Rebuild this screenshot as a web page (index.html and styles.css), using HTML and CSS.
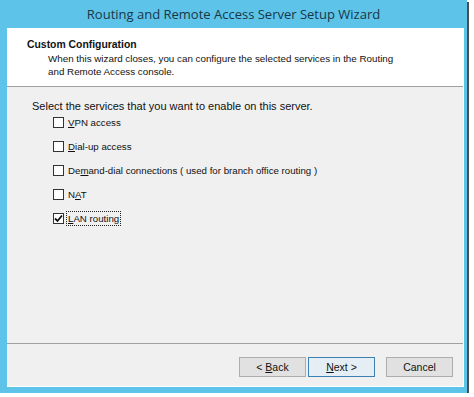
FILE: index.html
```html
<!DOCTYPE html>
<html>

<head>
    <title>Routing and Remote Access Server Setup Wizard</title>
    <meta charset="utf-8">
    <link rel="stylesheet" href="styles.css">
</head>

<body>
    <div class="wiz-window">
        <div class="wiz-title">Routing and Remote Access Server Setup Wizard</div>
        <div class="wiz-client">
            <div class="wiz-header">
                <h2>Custom Configuration</h2>
                <p>When this wizard closes, you can configure the selected services in the Routing<br>and Remote Access console.</p>
            </div>
            <div class="wiz-body">
                <p class="wiz-lead">Select the services that you want to enable on this server.</p>
                <ul class="wiz-options">
                    <li><span class="wiz-check"></span><span class="wiz-label"><u>V</u>PN access</span></li>
                    <li><span class="wiz-check"></span><span class="wiz-label"><u>D</u>ial-up access</span></li>
                    <li><span class="wiz-check"></span><span class="wiz-label">De<u>m</u>and-dial connections ( used for branch office routing )</span></li>
                    <li><span class="wiz-check"></span><span class="wiz-label">N<u>A</u>T</span></li>
                    <li><span class="wiz-check is-checked"><svg width="9" height="9" viewBox="0 0 9 9"><path d="M1 4.5 L3.5 7 L8 1.5" fill="none" stroke="#111" stroke-width="1.8"/></svg></span><span class="wiz-label is-focused"><u>L</u>AN routing</span></li>
                </ul>
            </div>
            <div class="wiz-footer">
                <button class="wiz-btn">&lt; <u>B</u>ack</button>
                <button class="wiz-btn is-default"><u>N</u>ext &gt;</button>
                <button class="wiz-btn wiz-cancel">Cancel</button>
            </div>
        </div>
    </div>
</body>

</html>
```

FILE: styles.css
```css
body {
    margin: 0;
    background: #fff;
    overflow: hidden;
}

.wiz-window {
    width: 467px;
    height: 393px;
    box-sizing: border-box;
    padding: 0 3px 6px 7px;
    background-color: #5ec3e8;
    box-shadow: 2px 2px 0 #4a4f52;
    display: flex;
    flex-direction: column;
}

.wiz-title {
    height: 28px;
    line-height: 28px;
    text-align: center;
    margin-left: -7px;
    margin-right: -3px;
    font-family: "Open Sans", "Noto Sans", sans-serif;
    font-size: 13px;
    color: #173848;
}

.wiz-client {
    flex: 1;
    display: flex;
    flex-direction: column;
    background-color: #f0f0f0;
    border-right: 1px solid #fff;
    border-bottom: 1px solid #fff;
    font-family: "Liberation Sans", Arial, sans-serif;
    font-size: 11px;
    color: #111;
}

.wiz-header {
    height: 59px;
    box-sizing: border-box;
    padding: 10px 0 0 20px;
    background-color: #fff;
    border-bottom: 1px solid #a0a0a0;
}

.wiz-header h2 {
    margin: 0;
    font-size: 10.4px;
    line-height: 13px;
}

.wiz-header p {
    margin: 1px 0 0 21px;
    font-size: 9.8px;
    line-height: 13px;
}

.wiz-body {
    flex: 1;
    padding: 13px 0 0 25px;
    border-bottom: 1px solid #a0a0a0;
}

.wiz-lead {
    margin: 0;
    line-height: 13px;
}

.wiz-options {
    list-style: none;
    margin: 0;
    padding: 3px 0 0 21px;
    display: flex;
    flex-direction: column;
    gap: 11px;
    font-size: 9.7px;
}

.wiz-options li {
    display: flex;
    align-items: center;
    height: 13px;
    line-height: 13px;
}

.wiz-check {
    width: 11px;
    height: 11px;
    box-sizing: border-box;
    border: 1px solid #333;
    background: #fff;
    margin-right: 2px;
    display: flex;
    align-items: center;
    justify-content: center;
}

.wiz-label {
    padding: 0 1px;
    border: 1px dotted transparent;
}

.wiz-label.is-focused {
    border-color: #222;
}

.wiz-footer {
    height: 42px;
    box-sizing: border-box;
    padding: 13px 10px 0 0;
    display: flex;
    justify-content: flex-end;
    align-items: flex-start;
    gap: 2px;
}

.wiz-btn {
    width: 67px;
    height: 20px;
    padding: 0;
    font-family: "Liberation Sans", Arial, sans-serif;
    font-size: 10.5px;
    color: #111;
    background-color: #e1e1e1;
    border: 1px solid #adadad;
}

.wiz-btn.is-default {
    border-color: #3c7fb1;
    background-color: #e5eef5;
}

.wiz-btn.wiz-cancel {
    margin-left: 9px;
}
```
